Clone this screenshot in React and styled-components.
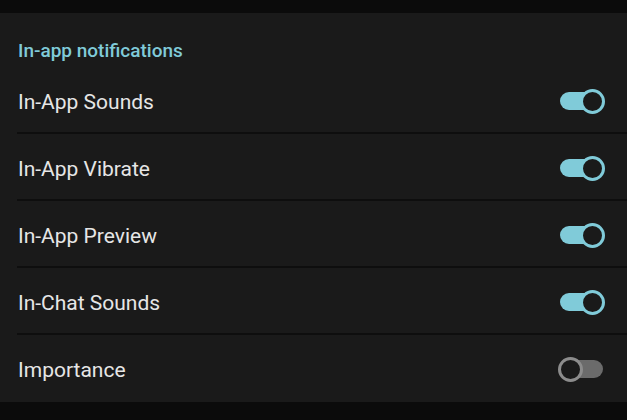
import React from "react";
import styled, { createGlobalStyle } from "styled-components";

const GlobalStyle = createGlobalStyle`
  html, body {
    margin: 0;
    padding: 0;
    background: #0b0b0b;
  }
  body {
    font-family: Roboto, "Liberation Sans", sans-serif;
  }
`;

const items = [
  { label: "In-App Sounds", on: true },
  { label: "In-App Vibrate", on: true },
  { label: "In-App Preview", on: true },
  { label: "In-Chat Sounds", on: true },
  { label: "Importance", on: false },
];

const App = () => {
  return (
    <>
      <GlobalStyle />
      <Screen>
        <Panel>
          <Header>In-app notifications</Header>
          {items.map((item, i) => (
            <Row key={item.label} last={i === items.length - 1}>
              <Label>{item.label}</Label>
              <Switch>
                <Track on={item.on} />
                <Thumb on={item.on} />
              </Switch>
            </Row>
          ))}
        </Panel>
      </Screen>
    </>
  );
};

export default App;

const Screen = styled.div`
  width: 627px;
  height: 420px;
  background: #0b0b0b;
  padding-top: 13px;
  box-sizing: border-box;
  overflow: hidden;
`;

const Panel = styled.div`
  background: #1a1a1a;
  height: 389px;
  display: flex;
  flex-direction: column;
  overflow: hidden;
`;

const Header = styled.div`
  height: 54px;
  flex-shrink: 0;
  box-sizing: border-box;
  padding: 27px 18px 0;
  color: #80cbd9;
  font-size: 19px;
  font-weight: 500;
  line-height: 22px;
`;

const Row = styled.div`
  height: 67px;
  flex-shrink: 0;
  display: flex;
  align-items: center;
  justify-content: space-between;
  padding: 0 22px 0 18px;
  position: relative;
  ${(p) =>
    !p.last &&
    `
    &::after {
      content: "";
      position: absolute;
      left: 17px;
      right: 0;
      bottom: 0;
      height: 2px;
      background: #0e0e0e;
    }
  `}
`;

const Label = styled.div`
  color: #e6e6e6;
  font-size: 21px;
  line-height: 24px;
  margin-top: 2px;
`;

const Switch = styled.div`
  position: relative;
  width: 46px;
  height: 26px;
  margin-top: 1px;
`;

const Track = styled.div`
  position: absolute;
  top: 4px;
  left: ${(p) => (p.on ? "1px" : "6px")};
  width: 38px;
  height: 18px;
  border-radius: 9px;
  background: ${(p) => (p.on ? "#80cbd9" : "#6b6b6b")};
`;

const Thumb = styled.div`
  position: absolute;
  top: 1px;
  left: ${(p) => (p.on ? "21px" : "-1px")};
  width: 19px;
  height: 19px;
  border-radius: 50%;
  background: #1a1a1a;
  border: 3px solid ${(p) => (p.on ? "#80cbd9" : "#8c8c8c")};
`;
